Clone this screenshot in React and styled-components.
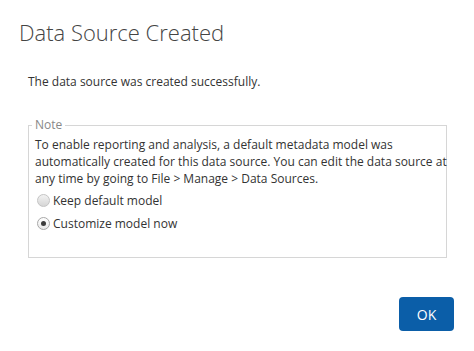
import React from "react"
import styled, { createGlobalStyle } from 'styled-components'

const GlobalStyle = createGlobalStyle`
  html, body {
    margin: 0;
    padding: 0;
    background: #ffffff;
  }
  body {
    font-family: "Open Sans", "Noto Sans", sans-serif;
    color: #333333;
  }
`

const Dialog = styled.div`
  width: 474px;
  height: 351px;
  box-sizing: border-box;
  display: flex;
  flex-direction: column;
  background: #ffffff;
`

const Title = styled.h1`
  margin: 17px 0 0 19px;
  font-size: 22px;
  line-height: 30px;
  font-weight: 300;
  color: #444444;
  white-space: nowrap;
`

const Message = styled.p`
  margin: 26px 0 0 28px;
  font-size: 12px;
  line-height: 18px;
  color: #333333;
`

const NoteBox = styled.fieldset`
  margin: 25px 27px 0 28px;
  padding: 0 2px 22px 6px;
  border: 1px solid #d6d6d6;
  min-width: 0;
`

const NoteLegend = styled.legend`
  padding: 0 3px;
  margin-left: -3px;
  font-size: 12px;
  line-height: 18px;
  color: #888888;
`

const NoteText = styled.p`
  margin: 2px 0 0 0;
  font-size: 12px;
  line-height: 17px;
  color: #333333;
  white-space: nowrap;
`

const Options = styled.div`
  display: flex;
  flex-direction: column;
  margin-top: 2px;
`

const OptionRow = styled.label`
  display: flex;
  align-items: center;
  gap: 3px;
  height: 23px;
  font-size: 12px;
  color: #333333;
  cursor: pointer;
`

const RadioDot = styled.span`
  position: relative;
  width: 11px;
  height: 11px;
  margin-left: 2px;
  border-radius: 50%;
  border: 1px solid ${p => (p.checked ? '#a8a8a8' : '#c4c4c4')};
  background: ${p => (p.checked
    ? 'linear-gradient(#ffffff, #e9e9e9)'
    : 'linear-gradient(#f2f2f2, #d6d6d6)')};
  flex: none;

  &::after {
    content: "";
    display: ${p => (p.checked ? 'block' : 'none')};
    position: absolute;
    left: 3px;
    top: 3px;
    width: 5px;
    height: 5px;
    border-radius: 50%;
    background: #3d3d3d;
  }
`

const Footer = styled.div`
  margin-top: auto;
  display: flex;
  justify-content: flex-end;
  padding: 0 20px 20px 0;
`

const OkButton = styled.button`
  width: 55px;
  height: 34px;
  border: none;
  border-radius: 4px;
  background: #0b5ea8;
  color: #ffffff;
  font-family: "Open Sans", "Noto Sans", sans-serif;
  font-size: 14px;
  cursor: pointer;
`

const options = [
  { label: 'Keep default model', checked: false },
  { label: 'Customize model now', checked: true },
]

const App = () => (
  <>
    <GlobalStyle />
    <Dialog>
      <Title>Data Source Created</Title>
      <Message>The data source was created successfully.</Message>
      <NoteBox>
        <NoteLegend>Note</NoteLegend>
        <NoteText>
          To enable reporting and analysis, a default metadata model was<br />
          automatically created for this data source. You can edit the data source at<br />
          any time by going to File &gt; Manage &gt; Data Sources.
        </NoteText>
        <Options>
          {options.map(o => (
            <OptionRow key={o.label}>
              <RadioDot checked={o.checked} />
              {o.label}
            </OptionRow>
          ))}
        </Options>
      </NoteBox>
      <Footer>
        <OkButton>OK</OkButton>
      </Footer>
    </Dialog>
  </>
)

export default App
